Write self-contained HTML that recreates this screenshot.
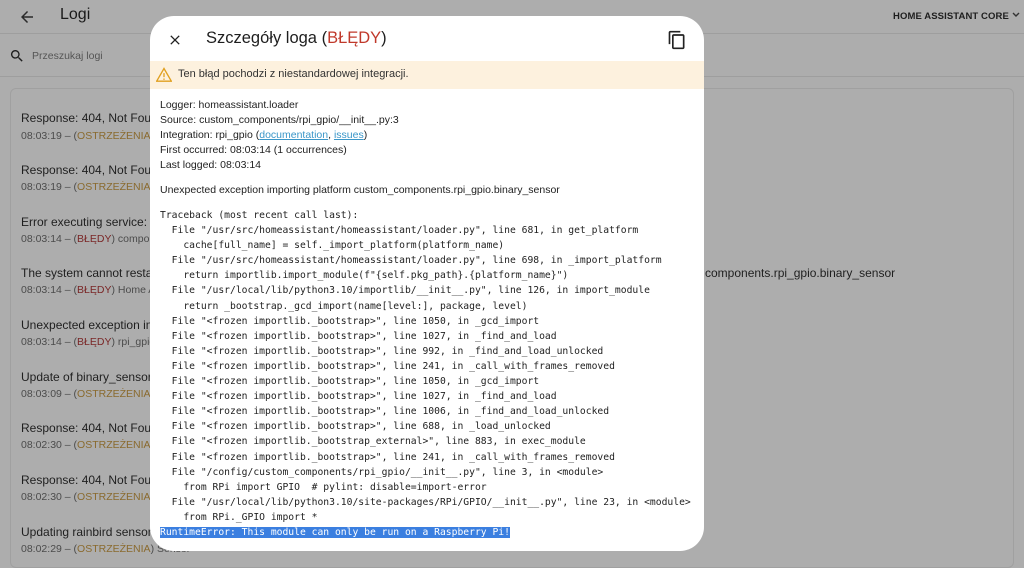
<!DOCTYPE html>
<html><head><meta charset="utf-8"><style>
*{margin:0;padding:0;box-sizing:border-box}
body{width:1024px;height:562px;overflow:hidden;background:#adadad;font-family:"Liberation Sans",Roboto,sans-serif;position:relative;color:#1e1e1e}
.abs{position:absolute;white-space:nowrap}
.hdr{position:absolute;left:0;top:0;width:1024px;height:34px;border-bottom:1px solid #9e9e9e}
.srch{position:absolute;left:0;top:34px;width:1024px;height:43px;border-bottom:1px solid #9e9e9e}
.card{position:absolute;left:10px;top:88px;width:1004px;height:480px;border:1px solid #a0a0a0;border-radius:6px}
.t{font-size:12px;color:#1f1f1f}
.s{font-size:10.5px;color:#4b4b4b}
.w{color:#8a6a2e}.e{color:#7a2626}
.dlg{position:absolute;left:150px;top:16px;width:554px;height:535px;background:#fff;border-radius:24px;overflow:hidden}
.warn{position:absolute;left:0;top:45px;width:554px;height:28px;background:#fdf1de}
.info{position:absolute;left:10px;top:82px;font-size:10.5px;line-height:15px;color:#212121}
.info a{color:#3a96c8;text-decoration:underline}
pre{position:absolute;left:10px;top:192px;font-family:"DejaVu Sans Mono","Liberation Mono",monospace;font-size:9.7px;line-height:15.1px;color:#222}
.hl{background:#3b7fe0;color:#fff}
</style></head><body>
<div class="hdr"></div>
<svg class="abs" style="left:18px;top:8px" width="18" height="18" viewBox="0 0 24 24"><path d="M20 11H7.8l5.6-5.6L12 4l-8 8 8 8 1.4-1.4L7.8 13H20z" fill="#2a2a2a"/></svg>
<div class="abs" style="left:60px;top:6px;font-size:16px;color:#1a1a1a">Logi</div>
<div class="abs" style="left:893px;top:11px;font-size:9.5px;font-weight:bold;letter-spacing:.1px;color:#1e1e1e">HOME ASSISTANT CORE</div>
<svg class="abs" style="left:1012px;top:12px" width="8" height="6" viewBox="0 0 8 6"><path d="M1 1l3 3 3-3" fill="none" stroke="#333" stroke-width="1.4"/></svg>
<div class="srch"></div>
<svg class="abs" style="left:9px;top:48px" width="16" height="16" viewBox="0 0 24 24"><path d="M15.5 14h-.8l-.3-.3A6.5 6.5 0 1 0 9.5 16a6.5 6.5 0 0 0 4.2-1.6l.3.3v.8l5 5 1.5-1.5zm-6 0A4.5 4.5 0 1 1 14 9.5 4.5 4.5 0 0 1 9.5 14z" fill="#1e1e1e"/></svg>
<div class="abs" style="left:32px;top:50px;font-size:10.5px;color:#555">Przeszukaj logi</div>
<div class="card"></div>
<div class="abs t" style="left:21px;top:111px">Response: 404, Not Found</div><div class="abs s" style="left:21px;top:130px">08:03:19 – (<span class="w">OSTRZEŻENIA</span>) c</div>
<div class="abs t" style="left:21px;top:163px">Response: 404, Not Found</div><div class="abs s" style="left:21px;top:181px">08:03:19 – (<span class="w">OSTRZEŻENIA</span>) c</div>
<div class="abs t" style="left:21px;top:215px">Error executing service: &lt;</div><div class="abs s" style="left:21px;top:233px">08:03:14 – (<span class="e">BŁĘDY</span>) components</div>
<div class="abs t" style="left:21px;top:266px">The system cannot restart</div><div class="abs t" style="left:705px;top:266px">components.rpi_gpio.binary_sensor</div><div class="abs s" style="left:21px;top:284px">08:03:14 – (<span class="e">BŁĘDY</span>) Home Assistant</div>
<div class="abs t" style="left:21px;top:318px">Unexpected exception imp</div><div class="abs s" style="left:21px;top:336px">08:03:14 – (<span class="e">BŁĘDY</span>) rpi_gpio</div>
<div class="abs t" style="left:21px;top:370px">Update of binary_sensor.r</div><div class="abs s" style="left:21px;top:388px">08:03:09 – (<span class="w">OSTRZEŻENIA</span>) h</div>
<div class="abs t" style="left:21px;top:421px">Response: 404, Not Found</div><div class="abs s" style="left:21px;top:439px">08:02:30 – (<span class="w">OSTRZEŻENIA</span>) c</div>
<div class="abs t" style="left:21px;top:473px">Response: 404, Not Found</div><div class="abs s" style="left:21px;top:491px">08:02:30 – (<span class="w">OSTRZEŻENIA</span>) c</div>
<div class="abs t" style="left:21px;top:525px">Updating rainbird sensor</div><div class="abs s" style="left:21px;top:543px">08:02:29 – (<span class="w">OSTRZEŻENIA</span>) Sensor</div>

<div class="dlg">
<svg class="abs" style="left:17px;top:16px" width="16" height="16" viewBox="0 0 24 24"><path d="M19 6.4 17.6 5 12 10.6 6.4 5 5 6.4 10.6 12 5 17.6 6.4 19 12 13.4 17.6 19 19 17.6 13.4 12z" fill="#222"/></svg>
<div class="abs" style="left:56px;top:13px;font-size:16.5px;color:#1e1e1e">Szczegóły loga (<span style="color:#c0392b">BŁĘDY</span>)</div>
<svg class="abs" style="left:517px;top:14px" width="20" height="20" viewBox="0 0 24 24"><path d="M16 1H4c-1.1 0-2 .9-2 2v14h2V3h12zm3 4H8c-1.1 0-2 .9-2 2v14c0 1.1.9 2 2 2h11c1.1 0 2-.9 2-2V7c0-1.1-.9-2-2-2zm0 16H8V7h11z" fill="#222"/></svg>
<div class="warn"></div>
<svg class="abs" style="left:6px;top:51px" width="16" height="15" viewBox="0 0 24 22"><path d="M12 2 1 21h22z" fill="none" stroke="#e0a020" stroke-width="2"/><path d="M11 9h2v6h-2zm0 8h2v2h-2z" fill="#e0a020"/></svg>
<div class="abs" style="left:28px;top:52px;font-size:11px;color:#333">Ten błąd pochodzi z niestandardowej integracji.</div>
<div class="info">Logger: homeassistant.loader<br>Source: custom_components/rpi_gpio/__init__.py:3<br>Integration: rpi_gpio (<a>documentation</a>, <a>issues</a>)<br>First occurred: 08:03:14 (1 occurrences)<br>Last logged: 08:03:14<br><div style="height:10px"></div>Unexpected exception importing platform custom_components.rpi_gpio.binary_sensor</div>
<pre>Traceback (most recent call last):
  File "/usr/src/homeassistant/homeassistant/loader.py", line 681, in get_platform
    cache[full_name] = self._import_platform(platform_name)
  File "/usr/src/homeassistant/homeassistant/loader.py", line 698, in _import_platform
    return importlib.import_module(f"{self.pkg_path}.{platform_name}")
  File "/usr/local/lib/python3.10/importlib/__init__.py", line 126, in import_module
    return _bootstrap._gcd_import(name[level:], package, level)
  File "&lt;frozen importlib._bootstrap&gt;", line 1050, in _gcd_import
  File "&lt;frozen importlib._bootstrap&gt;", line 1027, in _find_and_load
  File "&lt;frozen importlib._bootstrap&gt;", line 992, in _find_and_load_unlocked
  File "&lt;frozen importlib._bootstrap&gt;", line 241, in _call_with_frames_removed
  File "&lt;frozen importlib._bootstrap&gt;", line 1050, in _gcd_import
  File "&lt;frozen importlib._bootstrap&gt;", line 1027, in _find_and_load
  File "&lt;frozen importlib._bootstrap&gt;", line 1006, in _find_and_load_unlocked
  File "&lt;frozen importlib._bootstrap&gt;", line 688, in _load_unlocked
  File "&lt;frozen importlib._bootstrap_external&gt;", line 883, in exec_module
  File "&lt;frozen importlib._bootstrap&gt;", line 241, in _call_with_frames_removed
  File "/config/custom_components/rpi_gpio/__init__.py", line 3, in &lt;module&gt;
    from RPi import GPIO  # pylint: disable=import-error
  File "/usr/local/lib/python3.10/site-packages/RPi/GPIO/__init__.py", line 23, in &lt;module&gt;
    from RPi._GPIO import *
<span class="hl">RuntimeError: This module can only be run on a Raspberry Pi!</span></pre>
</div>
</body></html>
